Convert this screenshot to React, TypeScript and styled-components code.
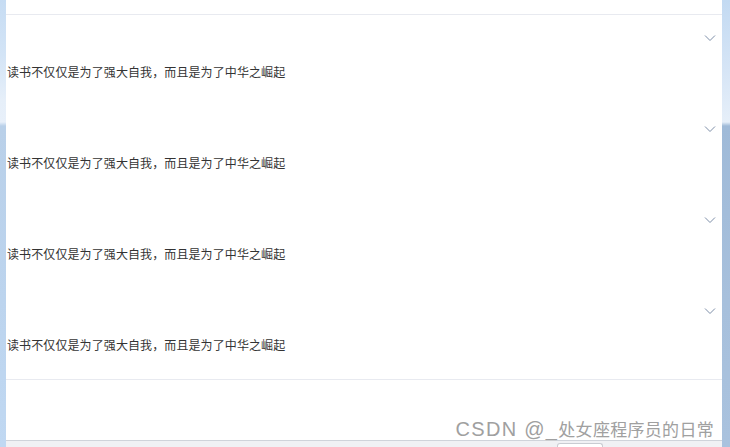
import styled, { createGlobalStyle } from "styled-components";

const GlobalStyle = createGlobalStyle`
  html, body {
    margin: 0;
    padding: 0;
  }
  body {
    width: 730px;
    height: 447px;
    overflow: hidden;
    font-family: "Noto Sans CJK SC", "Liberation Sans", sans-serif;
  }
`;

const items = [1, 2, 3, 4];

const Screen = styled.div`
  position: relative;
  width: 730px;
  height: 447px;
  display: flex;
  background: linear-gradient(
    to bottom,
    #c6dcf3 0px,
    #d3e4f6 55px,
    #e6eff9 100px,
    #e8f0fa 122px,
    #b9d0e9 126px,
    #bcd4ee 300px,
    #c0d8f2 447px
  );
`;

const LeftEdge = styled.div`
  width: 6px;
  flex-shrink: 0;
`;

const RightEdge = styled.div`
  width: 8px;
  flex-shrink: 0;
  background: linear-gradient(
    to bottom,
    #c3daf2 0px,
    #d6e5f6 70px,
    #e6eff9 122px,
    #9fbad8 126px,
    #a7c0dc 300px,
    #a9c2de 447px
  );
`;

const Panel = styled.div`
  flex: 1;
  display: flex;
  flex-direction: column;
  background: #ffffff;
`;

const Header = styled.div`
  height: 14px;
  border-bottom: 1px solid #e8eaf0;
`;

const List = styled.div`
  display: flex;
  flex-direction: column;
  border-bottom: 1px solid #e8eaf0;
`;

const Item = styled.div`
  position: relative;
  height: 91px;
  box-sizing: border-box;
  padding: 48px 0 0 1px;
`;

const Toggle = styled.span`
  position: absolute;
  top: 19px;
  right: 6px;
  display: flex;
`;

const Content = styled.p`
  margin: 0;
  font-size: 12px;
  line-height: 18px;
  letter-spacing: 0.1px;
  color: #333333;
`;

const Spacer = styled.div`
  flex: 1;
`;

const Footer = styled.div`
  height: 6px;
  border-top: 1px solid #cfd3da;
  background: #f0f1f4;
  display: flex;
  padding-left: 551px;
`;

const FooterTab = styled.div`
  width: 44px;
  margin-top: 2px;
  border: 1px solid #c9ccd2;
  border-bottom: none;
  border-radius: 3px 3px 0 0;
  background: #ffffff;
`;

const Watermark = styled.div`
  position: absolute;
  right: 16px;
  bottom: 6px;
  display: flex;
  align-items: baseline;
  line-height: 24px;
  color: #a0a0a0;
  text-shadow: 0 0 1px #ffffff;
  white-space: pre;
`;

const MarkLatin = styled.span`
  font-family: "Liberation Sans", sans-serif;
  font-size: 20px;
  letter-spacing: 1.3px;
`;

const MarkCjk = styled.span`
  font-family: "Noto Sans CJK SC", sans-serif;
  font-size: 17px;
  letter-spacing: 0.3px;
`;

const Chevron = () => (
  <svg width="12" height="8" viewBox="0 0 12 8" fill="none">
    <polyline
      points="1,1.5 6,6.5 11,1.5"
      stroke="#7d8ea8"
      strokeWidth="1"
      strokeLinejoin="miter"
    />
  </svg>
);

export default function App() {
  return (
    <>
      <GlobalStyle />
      <Screen>
        <LeftEdge />
        <Panel>
          <Header />
          <List>
            {items.map((n) => (
              <Item key={n}>
                <Toggle>
                  <Chevron />
                </Toggle>
                <Content>读书不仅仅是为了强大自我，而且是为了中华之崛起</Content>
              </Item>
            ))}
          </List>
          <Spacer />
          <Footer>
            <FooterTab />
          </Footer>
        </Panel>
        <RightEdge />
        <Watermark>
          <MarkLatin>CSDN @_</MarkLatin>
          <MarkCjk>处女座程序员的日常</MarkCjk>
        </Watermark>
      </Screen>
    </>
  );
}
